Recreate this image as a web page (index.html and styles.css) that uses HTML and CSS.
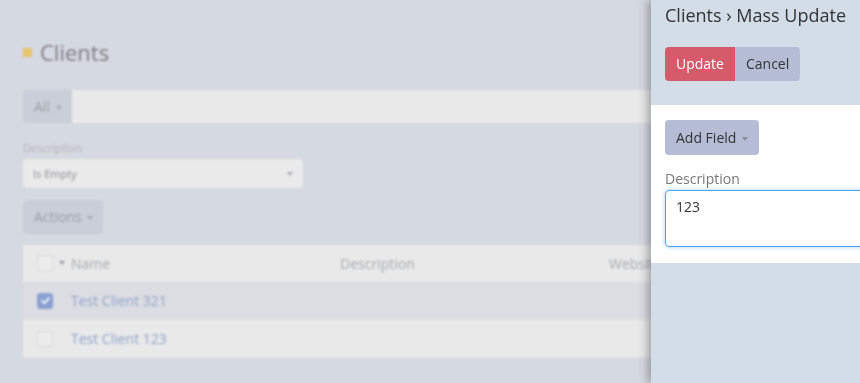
FILE: index.html
```html
<!DOCTYPE html>
<html>
<head>
<meta charset="utf-8">
<link rel="stylesheet" href="styles.css">
</head>
<body>
<div class="page">
  <div class="header">
    <span class="mark"></span>
    <h2 class="title">Clients</h2>
  </div>
  <div class="search">
    <div class="btn-all">All <span class="caret"></span></div>
    <div class="search-input"></div>
  </div>
  <div class="filter">
    <div class="filter-label">Description</div>
    <div class="filter-select">Is Empty <span class="caret"></span></div>
  </div>
  <div class="btn-actions">Actions <span class="caret"></span></div>
  <div class="table">
    <div class="row head">
      <div class="cell c-check"><span class="cb"></span><span class="caret dark"></span></div>
      <div class="cell c-name">Name</div>
      <div class="cell c-desc">Description</div>
      <div class="cell c-web">Website</div>
    </div>
    <div class="row sel">
      <div class="cell c-check"><span class="cb checked"><svg viewBox="0 0 16 16" width="11" height="11"><path d="M3 8.5 L6.5 12 L13 4.5" fill="none" stroke="#fff" stroke-width="2.4" stroke-linecap="round" stroke-linejoin="round"/></svg></span></div>
      <div class="cell c-name link">Test Client 321</div>
      <div class="cell c-desc"></div>
      <div class="cell c-web"></div>
    </div>
    <div class="row">
      <div class="cell c-check"><span class="cb"></span></div>
      <div class="cell c-name link">Test Client 123</div>
      <div class="cell c-desc"></div>
      <div class="cell c-web"></div>
    </div>
  </div>
</div>

<div class="panel">
  <div class="panel-head">
    <h3 class="panel-title">Clients › Mass Update</h3>
    <div class="btn-group">
      <button class="btn btn-danger">Update</button>
      <button class="btn btn-default">Cancel</button>
    </div>
  </div>
  <div class="panel-body">
    <button class="btn btn-default btn-single">Add Field <span class="caret dark2"></span></button>
    <label class="field-label">Description</label>
    <div class="textarea">123</div>
  </div>
</div>
</body>
</html>
```

FILE: styles.css
```css
html, body {
  margin: 0;
  padding: 0;
  height: 100%;
  overflow: hidden;
  background: #d5d9e1;
  font-family: "Open Sans", "Noto Sans", sans-serif;
}

.page {
  padding: 0 0 0 23px;
  width: 100%;
  box-sizing: border-box;
  filter: blur(0.9px);
}

.header {
  display: flex;
  align-items: center;
  height: 103px;
}
.mark {
  width: 9px;
  height: 9px;
  background: #e7c46d;
  margin-right: 8px;
  margin-top: 2px;
}
.title {
  margin: 0;
  font-size: 22px;
  font-weight: 400;
  color: #7c7d80;
}

.caret {
  display: inline-block;
  width: 0;
  height: 0;
  border-left: 3.5px solid transparent;
  border-right: 3.5px solid transparent;
  border-top: 4px solid #a9acb3;
  vertical-align: middle;
  margin-left: 2px;
}
.caret.dark { border-top-color: #9a9ca3; }
.caret.dark2 { border-top-color: #8a8e9a; }

.search {
  display: flex;
  height: 33px;
  margin-top: -13px;
}
.btn-all {
  width: 49px;
  box-sizing: border-box;
  padding-left: 11px;
  background: #c9ced9;
  border-radius: 4px 0 0 4px;
  color: #9b9ea5;
  font-size: 14px;
  line-height: 33px;
}
.search-input {
  flex: 1;
  background: #e9e9e9;
}

.filter { margin-top: 17px; }
.filter-label {
  font-size: 11px;
  color: #b1b3b8;
  line-height: 15px;
}
.filter-select {
  width: 280px;
  height: 29px;
  box-sizing: border-box;
  margin-top: 4px;
  background: #eaeaea;
  border-radius: 4px;
  font-size: 11px;
  line-height: 29px;
  color: #8d8f94;
  padding: 0 10px;
  display: flex;
  justify-content: space-between;
  align-items: center;
}

.btn-actions {
  margin-top: 12px;
  width: 80px;
  height: 34px;
  box-sizing: border-box;
  padding-left: 11px;
  background: #c9ced9;
  border-radius: 4px;
  font-size: 14px;
  line-height: 34px;
  color: #9b9ea5;
}

.table { margin-top: 11px; }
.row {
  display: flex;
  height: 38px;
  align-items: center;
  background: #e9e9e9;
  border-bottom: 1px solid #e0e1e5;
  box-sizing: border-box;
}
.row.head { height: 37px; }
.row.sel { background: #dcdde2; }
.cell { font-size: 14px; color: #a8aaae; }
.c-check {
  width: 48px;
  padding-left: 14px;
  box-sizing: border-box;
  display: flex;
  align-items: center;
}
.c-name { width: 269px; }
.c-desc { width: 269px; }
.c-web { flex: 1; }
.link { color: #8fa2cd; }
.cb {
  width: 14px;
  height: 14px;
  border: 1px solid #dadbdf;
  border-radius: 3px;
  background: #ececec;
  display: inline-flex;
  align-items: center;
  justify-content: center;
}
.cb.checked {
  background: #8b9fd1;
  border-color: #8b9fd1;
}
.head .caret { margin-left: 6px; }

.panel {
  position: fixed;
  top: 0;
  bottom: 0;
  left: 651px;
  right: 0;
  overflow: hidden;
  background: #d2dde8;
  box-shadow: -3px 0 9px rgba(60, 64, 72, 0.45);
}
.panel-head {
  padding: 3px 14px 24px;
}
.panel-title {
  margin: 0;
  font-size: 18px;
  line-height: 24px;
  font-weight: 400;
  color: #333;
  white-space: nowrap;
}
.btn-group {
  display: flex;
  margin-top: 20px;
}
.btn {
  font-family: "Open Sans", "Noto Sans", sans-serif;
  font-size: 14px;
  height: 34px;
  line-height: 20px;
  padding: 0 11px;
  border: none;
  border-radius: 4px;
  cursor: pointer;
}
.btn-group .btn:first-child { border-radius: 4px 0 0 4px; }
.btn-group .btn:last-child { border-radius: 0 4px 4px 0; }
.btn-danger {
  background: #d55b6b;
  color: #fff;
}
.btn-default {
  background: #b5bdd6;
  color: #333;
}
.btn-single {
  display: block;
  width: 94px;
  height: 35px;
  padding: 0;
}

.panel-body {
  background: #fff;
  padding: 15px 0 16px 14px;
}
.field-label {
  display: block;
  margin-top: 14px;
  font-size: 14px;
  line-height: 20px;
  color: #777;
}
.textarea {
  margin-top: 1px;
  margin-right: -30px;
  height: 57px;
  box-sizing: border-box;
  border: 1px solid #4aa5e6;
  border-radius: 4px;
  box-shadow: 0 0 4px rgba(74, 165, 230, 0.5);
  padding: 5px 10px;
  font-size: 14px;
  line-height: 22px;
  color: #333;
}
```
